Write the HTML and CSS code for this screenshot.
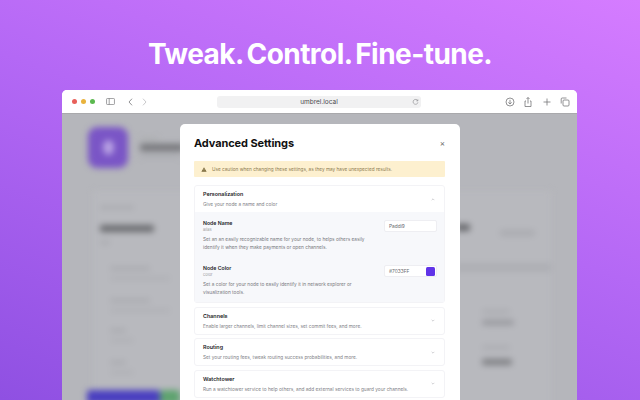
FILE: index.html
```html
<!DOCTYPE html>
<html lang="en">
<head>
<meta charset="utf-8">
<title>Advanced Settings</title>
<link rel="stylesheet" href="styles.css">
</head>
<body>
<div class="page">
  <h1 class="headline">Tweak. Control. Fine-tune.</h1>
  <div class="window">
    <div class="toolbar">
      <div class="lights"><i class="light red"></i><i class="light yellow"></i><i class="light green"></i></div>
      <svg class="tool side" viewBox="0 0 10 8"><rect x=".5" y=".5" width="9" height="7" rx="1"/><path d="M3.500 .5v7"/></svg>
      <svg class="tool nav" viewBox="0 0 5 8"><path d="M4 .7 1 4l3 3.300"/></svg>
      <svg class="tool nav off" viewBox="0 0 5 8"><path d="M1 .7 4 4 1 7.300"/></svg>
      <div class="address"><span class="url">umbrel.local</span>
        <svg class="reload" viewBox="0 0 8 8"><path d="M6.600 3.200A2.800 2.800 0 1 0 6.800 5M6.700 1.500v1.800H4.900"/></svg>
      </div>
      <div class="tools">
        <svg class="tool big" viewBox="0 0 10 10"><circle cx="5" cy="5" r="4"/><path d="M5 2.800v4.200M3.300 5.400 5 7l1.700-1.600"/></svg>
        <svg class="tool big" viewBox="0 0 10 10"><path d="M3 4H2v5.500h6V4H7M5 6.500V.500M3.500 2 5 .500 6.500 2"/></svg>
        <svg class="tool big" viewBox="0 0 10 10"><path d="M5 1.500v7M1.500 5h7"/></svg>
        <svg class="tool big" viewBox="0 0 10 10"><rect x="3" y="3" width="6" height="6" rx="1"/><path d="M1.200 6.500V2a1 1 0 0 1 1-1h4.300"/></svg>
      </div>
    </div>
    <div class="viewport">
      <div class="backdrop">
        <div class="bg-header">
          <div class="bg-icon"><i class="bg-bolt"></i></div>
          <div class="bg-heading"><i class="bar bg-small"></i><i class="bar bg-name"></i><i class="bar bg-sub"></i></div>
        </div>
        <div class="bg-columns">
          <div class="bg-left">
            <i class="bar l1"></i><i class="bar l2"></i><i class="bar l3"></i>
            <i class="bar l4"></i><i class="bar l5"></i><i class="bar l4 gap"></i><i class="bar l5"></i>
            <i class="bar l6 gap2"></i><i class="bar l7"></i><i class="bar l6 gap"></i><i class="bar l7"></i>
            <div class="bg-buttons"><i class="bg-blue"></i><i class="bg-green"></i></div>
          </div>
          <div class="bg-right">
            <div class="bg-top"><i class="bar r00"></i><i class="bar r0"></i></div>
            <div class="bg-strip"></div>
            <div class="bg-stats"><i class="bar r1"></i><i class="bar r2"></i><i class="bar r1 gap-r"></i><i class="bar r3"></i></div>
          </div>
        </div>
      </div>
      <div class="modal">
        <div class="modal-head">
          <h2 class="modal-title">Advanced Settings</h2>
          <span class="close">×</span>
        </div>
        <div class="warning">
          <svg class="warn-icon" viewBox="0 0 10 9"><path d="M5 .5 9.700 8.500H.3z"/><path class="warn-mark" d="M5 3.400v2.500M5 6.700v.6"/></svg>
          <span>Use caution when changing these settings, as they may have unexpected results.</span>
        </div>
        <div class="card">
          <div class="card-head">
            <div>
              <div class="card-title">Personalization</div>
              <div class="card-desc">Give your node a name and color</div>
            </div>
            <svg class="chev" viewBox="0 0 6 4"><path d="M1 3 3 1l2 2"/></svg>
          </div>
          <div class="card-body">
            <div class="field">
              <div class="field-text">
                <div class="field-name">Node Name</div>
                <div class="field-key">alias</div>
                <div class="field-desc">Set an an easily recognizable name for your node, to helps others easily identify it when they make payments or open channels.</div>
              </div>
              <div class="input">Paddi9</div>
            </div>
            <div class="field">
              <div class="field-text">
                <div class="field-name">Node Color</div>
                <div class="field-key">color</div>
                <div class="field-desc">Set a color for your node to easily identify it in network explorer or visualization tools.</div>
              </div>
              <div class="input">#7033FF<i class="swatch"></i></div>
            </div>
          </div>
        </div>
        <div class="card">
          <div class="card-head">
            <div>
              <div class="card-title">Channels</div>
              <div class="card-desc">Enable larger channels, limit channel sizes, set commit fees, and more.</div>
            </div>
            <svg class="chev" viewBox="0 0 6 4"><path d="M1 1l2 2 2-2"/></svg>
          </div>
        </div>
        <div class="card">
          <div class="card-head">
            <div>
              <div class="card-title">Routing</div>
              <div class="card-desc">Set your routing fees, tweak routing success probabilities, and more.</div>
            </div>
            <svg class="chev" viewBox="0 0 6 4"><path d="M1 1l2 2 2-2"/></svg>
          </div>
        </div>
        <div class="card">
          <div class="card-head">
            <div>
              <div class="card-title">Watchtower</div>
              <div class="card-desc">Run a watchtower service to help others, and add external services to guard your channels.</div>
            </div>
            <svg class="chev" viewBox="0 0 6 4"><path d="M1 1l2 2 2-2"/></svg>
          </div>
        </div>
      </div>
    </div>
  </div>
</div>
</body>
</html>
```
FILE: styles.css
```css
* { box-sizing: border-box; }
html, body { margin: 0; padding: 0; }
body { font-family: Inter, "Liberation Sans", sans-serif; }
i { display: block; }
.page {
  width: 640px; height: 400px; overflow: hidden;
  background: linear-gradient(200deg, #d57cff 0%, #b468f5 45%, #8f50e2 100%);
  display: flex; flex-direction: column;
}
.headline {
  margin: 0; height: 90px; padding-top: 36px; text-align: center;
  font-size: 28px; line-height: 36px; font-weight: 700; letter-spacing: -0.55px; word-spacing: -2.500px; color: #fff;
}
.window {
  width: 515px; margin-left: 62px; flex: 1; min-height: 0; background: #fff;
  border-radius: 5px 5px 0 0; overflow: hidden;
  display: flex; flex-direction: column;
}
.toolbar {
  height: 24px; flex: none; display: flex; align-items: center;
  padding: 0 7px 0 10px; background: #fff;
  position: relative; z-index: 1;
  border-bottom: 1px solid #a9a9ac;
}
.lights { display: flex; gap: 4px; margin-right: 11px; }
.light { width: 5px; height: 5px; border-radius: 50%; }
.red { background: #e8605a; }
.yellow { background: #e9b33c; }
.green { background: #5bb94f; }
.tool { fill: none; stroke: #77777a; stroke-width: .8; }
.side { width: 9px; height: 7px; margin-right: 13px; }
.nav { width: 5px; height: 8px; margin-right: 9px; }
.nav.off { stroke: #bdbdbf; margin-right: 0; }
.address {
  width: 204px; height: 12px; margin-left: 70px; background: #f1f1f2; border-radius: 3px;
  display: flex; align-items: center; position: relative;
  justify-content: center;
}
.url { font-size: 6.500px; color: #4a4a4d; }
.reload { position: absolute; right: 2px; top: 2.500px; width: 7px; height: 7px; fill: none; stroke: #8a8a8d; stroke-width: .7; }
.tools { margin-left: auto; display: flex; gap: 8.500px; align-items: center; }
.big { width: 10px; height: 10px; }
.viewport { flex: 1; min-height: 0; position: relative; background: #b5b6bb; overflow: hidden; }
.backdrop { height: 100%; padding: 13px 26px 0; filter: blur(3px); }
.bg-header { display: flex; align-items: center; gap: 12px; }
.bg-icon {
  width: 40px; height: 41px; border-radius: 9px; background: #7a55c6;
  display: flex; align-items: center; justify-content: center;
}
.bg-bolt { width: 11px; height: 15px; background: #b9a3e4; border-radius: 50%; }
.bg-heading { display: flex; flex-direction: column; gap: 4px; }
.bar { border-radius: 2px; }
.bg-small { width: 18px; height: 2px; background: #a7aaaa; }
.bg-name { width: 44px; height: 7px; background: #737478; }
.bg-sub { width: 40px; height: 2px; background: #a2a3a8; }
.bg-columns { display: flex; margin: 23px 0 0 5px; height: 240px; background: #b8b9be; }
.bg-left { width: 100px; padding: 15px 0 0 7px; display: flex; flex-direction: column; position: relative; }
.l1 { width: 34px; height: 3px; background: #a6a7ac; }
.l2 { width: 54px; height: 7px; background: #6a6b6f; margin-top: 16px; }
.l3 { width: 10px; height: 3px; background: #a6a7ac; margin-top: 9px; margin-bottom: 23px; }
.l4 { width: 40px; height: 3px; background: #a5a6ab; margin-left: 10px; }
.l5 { width: 60px; height: 3px; background: #adaeb3; margin-left: 10px; margin-top: 7px; }
.l6 { width: 16px; height: 3px; background: #a5a6ab; margin-left: 10px; }
.l7 { width: 24px; height: 3px; background: #adaeb3; margin-left: 10px; margin-top: 7px; }
.gap { margin-top: 19px; }
.gap2 { margin-top: 17px; }
.bg-buttons { position: absolute; left: -6px; top: 199px; display: flex; width: 93px; height: 14px; }
.bg-blue { width: 73px; background: #4a3fc0; border-radius: 3px 3px 0 0; }
.bg-green { width: 20px; background: #5ea36f; border-radius: 3px 3px 0 0; }
.bg-right { margin-left: auto; width: 95px; display: flex; flex-direction: column; }
.bg-top { height: 72px; display: flex; justify-content: space-between; padding: 0 16px 0 0; }
.r00 { width: 14px; height: 7px; margin-top: 33px; background: #66676b; }
.r0 { width: 35px; height: 6px; margin-top: 39px; background: #aaabb0; }
.bg-strip { height: 9px; background: #aeafb4; }
.bg-stats { padding: 38px 0 0 26px; }
.r1 { width: 28px; height: 3px; background: #a7a8ad; }
.r2 { width: 32px; height: 5px; background: #96979c; margin-top: 7px; }
.gap-r { margin-top: 21px; }
.r3 { width: 30px; height: 6px; background: #7e7f83; margin-top: 10px; }
.modal {
  position: absolute; left: 118px; top: 10px; width: 280px; height: 290px;
  background: #fff; border-radius: 5px 5px 0 0; padding: 0 15px 0 14px;
}
.modal-head { height: 37px; display: flex; align-items: center; justify-content: space-between; }
.modal-title { margin: 0; font-size: 11px; line-height: 14px; font-weight: 700; color: #111; letter-spacing: -0.1px; }
.close { font-size: 8px; color: #666; }
.warning {
  height: 16px; background: #fdf0cf; border-radius: 1px; display: flex; align-items: center;
  padding-left: 7px; gap: 5px; font-size: 4.700px; color: #8c7a50;
}
.warn-icon { width: 6px; height: 5px; fill: #7a6a3c; }
.warn-mark { fill: none; stroke: #fdf0cf; stroke-width: .8; }
.card { border: 1px solid #f3f3f6; border-radius: 3px; margin-top: 8px; }
.card + .card { margin-top: 3.500px; }
.card-head { height: 26px; padding: 0 7px 0 8px; display: flex; align-items: center; justify-content: space-between; }
.card-title { font-size: 5.400px; line-height: 7px; font-weight: 600; color: #1c1c1f; }
.card-desc { font-size: 4.750px; line-height: 6px; margin-top: 3px; color: #808086; }
.chev { width: 4px; height: 3px; fill: none; stroke: #a8a8ae; stroke-width: .8; margin-right: 2px; }
.card-body { background: #f7f8fb; padding: 0 7px 0 8px; }
.field { display: flex; justify-content: space-between; height: 45px; padding-top: 8px; }
.field-text { width: 168px; }
.field-name { font-size: 5.200px; line-height: 6px; font-weight: 600; color: #1c1c1f; }
.field-key { font-size: 4px; line-height: 4px; margin-top: 2px; color: #9a9aa0; }
.field-desc { font-size: 4.750px; line-height: 7.500px; margin-top: 4px; color: #78787e; }
.input {
  width: 53px; height: 12px; background: #fff; border: 1px solid #eeeef2; border-radius: 2px;
  font-size: 4.800px; color: #66666b; display: flex; align-items: center; justify-content: space-between; padding: 0 1px 0 4px;
}
.swatch { width: 9px; height: 9px; background: #6033e8; border-radius: 1.500px; }
```
